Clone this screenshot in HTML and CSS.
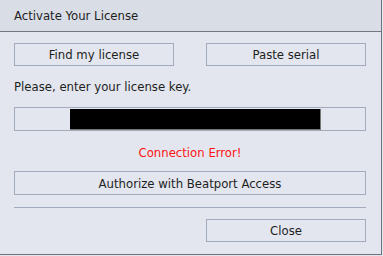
FILE: index.html
```html
<!DOCTYPE html>
<html>
<head>
<meta charset="utf-8">
<link rel="stylesheet" href="styles.css">
</head>
<body>
<div class="dialog">
  <div class="titlebar">Activate Your License</div>
  <div class="content">
    <div class="row">
      <button class="btn half">Find my license</button>
      <button class="btn half">Paste serial</button>
    </div>
    <div class="label">Please, enter your license key.</div>
    <div class="input"><div class="redact"></div></div>
    <div class="error">Connection Error!</div>
    <button class="btn full">Authorize with Beatport Access</button>
    <div class="sep"></div>
    <div class="row end">
      <button class="btn half close">Close</button>
    </div>
  </div>
</div>
</body>
</html>
```
FILE: styles.css
```css
html, body {
  margin: 0;
  padding: 0;
  background: #e3e6ee;
  width: 383px;
  height: 256px;
  overflow: hidden;
}
.dialog {
  width: 381px;
  height: 254px;
  background: #e3e6ee;
  border-right: 1px solid #6f727a;
  border-bottom: 1px solid #6f727a;
  font-family: "DejaVu Sans Condensed", "DejaVu Sans", sans-serif;
  font-size: 13px;
  color: #1e1e1e;
  display: flex;
  flex-direction: column;
}
.titlebar {
  height: 31px;
  line-height: 31px;
  padding-left: 14px;
  background: #d9dde5;
  border-bottom: 1px solid #74777f;
  flex: none;
}
.content {
  padding: 11px 0 0 14px;
  width: 352px;
  display: flex;
  flex-direction: column;
}
.row {
  display: flex;
  justify-content: space-between;
}
.row.end {
  justify-content: flex-end;
}
.btn {
  font: inherit;
  color: inherit;
  background: #e3e6ee;
  border: 1px solid #a2abbb;
  border-radius: 0;
  padding: 0;
  margin: 0;
  height: 23px;
}
.half {
  width: 160px;
}
.full {
  width: 352px;
  height: 24px;
}
.label {
  margin-top: 14px;
  line-height: 14px;
}
.input {
  margin-top: 13px;
  height: 22px;
  border: 1px solid #a2abbb;
  display: flex;
  align-items: center;
}
.redact {
  margin-left: 55px;
  width: 250px;
  height: 20px;
  background: #000;
  border-right: 1px solid #777;
  border-bottom: 1px solid #777;
}
.error {
  color: #ff1414;
  text-align: center;
  line-height: 14px;
  margin-top: 15px;
  margin-bottom: 11px;
}
.sep {
  height: 1px;
  background: #a2abbb;
  margin-top: 12px;
  margin-bottom: 11px;
}
```
